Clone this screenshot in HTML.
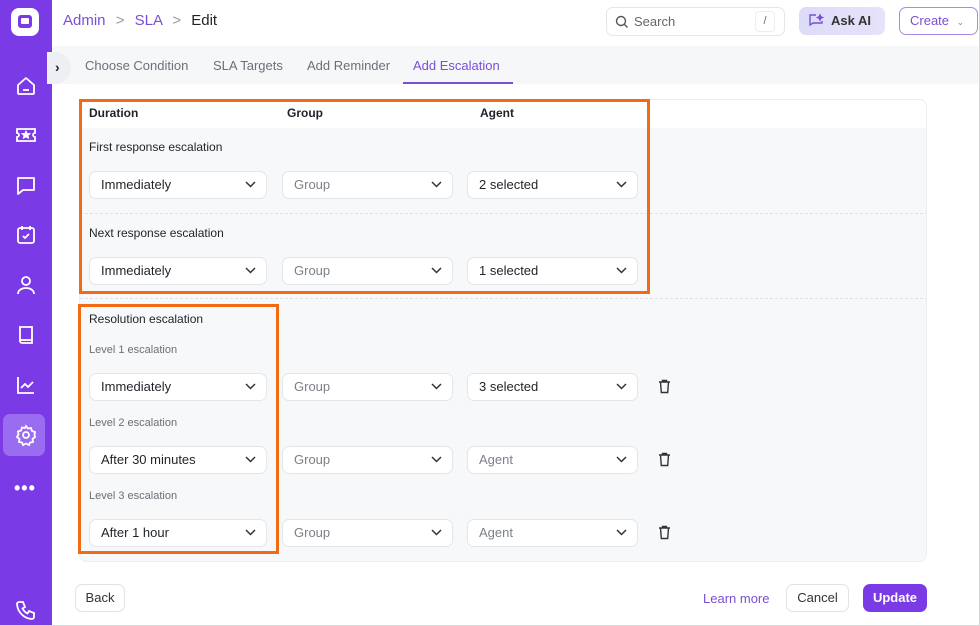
<!DOCTYPE html>
<html><head><style>
*{box-sizing:border-box;margin:0;padding:0}
body{width:980px;height:626px;overflow:hidden;background:#fff;font-family:"Liberation Sans",sans-serif;position:relative;color:#1f2328}
.abs{position:absolute}
.side{left:0;top:0;width:52px;height:626px;background:#7a3ae6}
.ic{position:absolute;left:14px;width:24px;height:24px}
.sel{position:absolute;height:28px;background:#fff;border:1px solid #e3e6ea;border-radius:7px;font-size:13px;line-height:26px;padding-left:11px;color:#1f2328}
.sel.ph{color:#7b8088}
.sel svg{position:absolute;right:10px;top:9px}
.lbl{position:absolute;font-size:12px;color:#1f2328}
.sub{position:absolute;font-size:11px;color:#6b7078}
.btn{position:absolute;height:28px;border:1px solid #e0e3e7;border-radius:7px;font-size:13px;line-height:26px;text-align:center;background:#fff}
</style></head><body>
<div class="abs" style="left:0;top:0;width:980px;height:626px;border:1px solid #d8d8d8;border-left:none;border-top:none;pointer-events:none;z-index:5"></div>
<div class="abs side">
<div class="abs" style="left:11px;top:8px;width:28px;height:28px;border-radius:8px;background:#fff"><div class="abs" style="left:7px;top:7px;width:14px;height:13px;border-radius:3px;background:#7a3ae6"></div><div class="abs" style="left:10px;top:10px;width:8px;height:6px;background:#fff;border-radius:1px"></div></div>
<svg class="ic" style="top:74px" viewBox="0 0 24 24" fill="none" stroke="#fff" stroke-width="1.8" stroke-linejoin="round"><path d="M4 11l8-7 8 7v8a1 1 0 0 1-1 1H5a1 1 0 0 1-1-1z"/><path d="M9 16h6"/></svg>
<svg class="ic" style="top:123px" viewBox="0 0 24 24" fill="none" stroke="#fff" stroke-width="1.8"><path d="M3 6h18v4a2 2 0 0 0 0 4v4H3v-4a2 2 0 0 0 0-4z"/><path d="M12 9l1 2h2l-1.5 1.5.5 2-2-1-2 1 .5-2L9 11h2z" fill="#fff"/></svg>
<svg class="ic" style="top:173px" viewBox="0 0 24 24" fill="none" stroke="#fff" stroke-width="1.8" stroke-linejoin="round"><path d="M4 5h16v12H9l-5 4z"/></svg>
<svg class="ic" style="top:223px" viewBox="0 0 24 24" fill="none" stroke="#fff" stroke-width="1.8"><rect x="4" y="5" width="16" height="15" rx="2"/><path d="M8 3v4M16 3v4M9 13l2 2 4-4"/></svg>
<svg class="ic" style="top:273px" viewBox="0 0 24 24" fill="none" stroke="#fff" stroke-width="1.8"><circle cx="12" cy="8" r="4"/><path d="M4 21c0-4 4-6 8-6s8 2 8 6"/></svg>
<svg class="ic" style="top:323px" viewBox="0 0 24 24" fill="none" stroke="#fff" stroke-width="1.8"><path d="M6 4h12v16H8a2 2 0 0 1-2-2z"/><path d="M6 17h12"/></svg>
<svg class="ic" style="top:373px" viewBox="0 0 24 24" fill="none" stroke="#fff" stroke-width="1.8"><path d="M4 4v16h16"/><path d="M7 15l4-4 3 3 5-5"/></svg>
<div class="abs" style="left:3px;top:414px;width:42px;height:42px;border-radius:7px;background:#9a6cf0"></div>
<svg class="ic" style="top:423px" viewBox="0 0 24 24" fill="none" stroke="#fff" stroke-width="1.8"><circle cx="12" cy="12" r="3"/><path d="M12 3l2 2.5 3-.5 1 3 3 1-.5 3L21 14l-2.5 2 .5 3-3 .5-1 2.5-3-1.5-3 1.5-1-2.5-3-.5.5-3L3 14l1.5-2.5-.5-3 3-1 1-3 3 .5z"/></svg>
<div class="abs" style="left:14px;top:478px;color:#fff;font-size:18px;font-weight:bold;letter-spacing:1px">•••</div>
<svg class="ic" style="top:598px" viewBox="0 0 24 24" fill="none" stroke="#fff" stroke-width="1.8"><path d="M5 4h4l2 5-2.5 1.5a11 11 0 0 0 5 5L15 13l5 2v4a2 2 0 0 1-2 2A16 16 0 0 1 3 6a2 2 0 0 1 2-2z"/></svg>
</div>
<div class="abs" style="left:63px;top:12px;font-size:15px;color:#7a4fd6">Admin <span style="color:#999;margin:0 6px">&gt;</span> SLA <span style="color:#999;margin:0 6px">&gt;</span> <span style="color:#1f2328">Edit</span></div>
<div class="abs" style="left:606px;top:7px;width:179px;height:29px;border:1px solid #e3e6ea;border-radius:7px;font-size:13px;color:#666;line-height:27px;padding-left:27px">Search
<svg class="abs" style="left:8px;top:7px" width="14" height="14" viewBox="0 0 14 14" fill="none" stroke="#555" stroke-width="1.4"><circle cx="6" cy="6" r="4.5"/><path d="M9.5 9.5l3 3"/></svg>
<div class="abs" style="left:148px;top:3px;width:20px;height:21px;border:1px solid #eee;border-radius:4px;font-size:11px;line-height:19px;text-align:center">/</div></div>
<div class="abs" style="left:799px;top:7px;width:86px;height:28px;border-radius:7px;background:linear-gradient(90deg,#dcdcf8,#e8e2fa);font-size:13px;font-weight:bold;line-height:28px;padding-left:32px;color:#333">Ask AI
<svg class="abs" style="left:9px;top:6px" width="17" height="16" viewBox="0 0 17 16" fill="none" stroke="#7a4fd6" stroke-width="1.4"><path d="M8 2H2v10l3-2h9V8"/><path d="M12 2l.8 1.7L14.5 4.5l-1.7.8L12 7l-.8-1.7L9.5 4.5l1.7-.8z" fill="#7a4fd6"/></svg></div>
<div class="abs" style="left:899px;top:7px;width:79px;height:28px;border:1px solid #a88be6;border-radius:7px;font-size:13px;line-height:26px;padding-left:10px;color:#7a4fd6">Create <span style="font-size:9px;color:#888;margin-left:4px">⌄</span></div>
<div class="abs" style="left:52px;top:46px;width:927px;height:38px;background:#f5f7f9"></div>
<div class="abs" style="left:47px;top:52px;width:24px;height:32px;border-radius:0 16px 16px 0;background:#edeff2;font-size:14px;font-weight:bold;line-height:30px;padding-left:8px">›</div>
<div class="abs" style="left:85px;top:58px;font-size:13px;color:#6b7078">Choose Condition</div>
<div class="abs" style="left:213px;top:58px;font-size:13px;color:#6b7078">SLA Targets</div>
<div class="abs" style="left:307px;top:58px;font-size:13px;color:#6b7078">Add Reminder</div>
<div class="abs" style="left:413px;top:58px;font-size:13px;color:#7a4fd6">Add Escalation</div>
<div class="abs" style="left:403px;top:82px;width:110px;height:2px;background:#7a4fd6"></div>
<div class="abs" style="left:79px;top:99px;width:848px;height:463px;border:1px solid #eceef1;border-radius:8px;background:#f6f8fa;overflow:hidden">
<div class="abs" style="left:0;top:0;width:848px;height:28px;background:#fff"></div>
<div class="abs" style="left:0;top:113px;width:848px;border-top:1px dashed #dfe2e6"></div>
<div class="abs" style="left:0;top:198px;width:848px;border-top:1px dashed #dfe2e6"></div>
</div>
<div class="lbl" style="left:89px;top:106px;font-weight:bold">Duration</div>
<div class="lbl" style="left:287px;top:106px;font-weight:bold">Group</div>
<div class="lbl" style="left:480px;top:106px;font-weight:bold">Agent</div>
<div class="lbl" style="left:89px;top:140px">First response escalation</div>
<div class="lbl" style="left:89px;top:226px">Next response escalation</div>
<div class="lbl" style="left:89px;top:312px">Resolution escalation</div>
<div class="sub" style="left:89px;top:344px">Level 1 escalation</div>
<div class="sub" style="left:89px;top:417px">Level 2 escalation</div>
<div class="sub" style="left:89px;top:490px">Level 3 escalation</div>

<div class="sel" style="left:89px;top:171px;width:178px">Immediately<svg width="11" height="7" viewBox="0 0 11 7" fill="none" stroke="#333" stroke-width="1.5"><path d="M1 1l4.5 4.5L10 1"/></svg></div>
<div class="sel ph" style="left:282px;top:171px;width:171px">Group<svg width="11" height="7" viewBox="0 0 11 7" fill="none" stroke="#333" stroke-width="1.5"><path d="M1 1l4.5 4.5L10 1"/></svg></div>
<div class="sel" style="left:467px;top:171px;width:171px">2 selected<svg width="11" height="7" viewBox="0 0 11 7" fill="none" stroke="#333" stroke-width="1.5"><path d="M1 1l4.5 4.5L10 1"/></svg></div>

<div class="sel" style="left:89px;top:257px;width:178px">Immediately<svg width="11" height="7" viewBox="0 0 11 7" fill="none" stroke="#333" stroke-width="1.5"><path d="M1 1l4.5 4.5L10 1"/></svg></div>
<div class="sel ph" style="left:282px;top:257px;width:171px">Group<svg width="11" height="7" viewBox="0 0 11 7" fill="none" stroke="#333" stroke-width="1.5"><path d="M1 1l4.5 4.5L10 1"/></svg></div>
<div class="sel" style="left:467px;top:257px;width:171px">1 selected<svg width="11" height="7" viewBox="0 0 11 7" fill="none" stroke="#333" stroke-width="1.5"><path d="M1 1l4.5 4.5L10 1"/></svg></div>

<div class="sel" style="left:89px;top:373px;width:178px">Immediately<svg width="11" height="7" viewBox="0 0 11 7" fill="none" stroke="#333" stroke-width="1.5"><path d="M1 1l4.5 4.5L10 1"/></svg></div>
<div class="sel ph" style="left:282px;top:373px;width:171px">Group<svg width="11" height="7" viewBox="0 0 11 7" fill="none" stroke="#333" stroke-width="1.5"><path d="M1 1l4.5 4.5L10 1"/></svg></div>
<div class="sel" style="left:467px;top:373px;width:171px">3 selected<svg width="11" height="7" viewBox="0 0 11 7" fill="none" stroke="#333" stroke-width="1.5"><path d="M1 1l4.5 4.5L10 1"/></svg></div>

<div class="sel" style="left:89px;top:446px;width:178px">After 30 minutes<svg width="11" height="7" viewBox="0 0 11 7" fill="none" stroke="#333" stroke-width="1.5"><path d="M1 1l4.5 4.5L10 1"/></svg></div>
<div class="sel ph" style="left:282px;top:446px;width:171px">Group<svg width="11" height="7" viewBox="0 0 11 7" fill="none" stroke="#333" stroke-width="1.5"><path d="M1 1l4.5 4.5L10 1"/></svg></div>
<div class="sel ph" style="left:467px;top:446px;width:171px">Agent<svg width="11" height="7" viewBox="0 0 11 7" fill="none" stroke="#333" stroke-width="1.5"><path d="M1 1l4.5 4.5L10 1"/></svg></div>

<div class="sel" style="left:89px;top:519px;width:178px">After 1 hour<svg width="11" height="7" viewBox="0 0 11 7" fill="none" stroke="#333" stroke-width="1.5"><path d="M1 1l4.5 4.5L10 1"/></svg></div>
<div class="sel ph" style="left:282px;top:519px;width:171px">Group<svg width="11" height="7" viewBox="0 0 11 7" fill="none" stroke="#333" stroke-width="1.5"><path d="M1 1l4.5 4.5L10 1"/></svg></div>
<div class="sel ph" style="left:467px;top:519px;width:171px">Agent<svg width="11" height="7" viewBox="0 0 11 7" fill="none" stroke="#333" stroke-width="1.5"><path d="M1 1l4.5 4.5L10 1"/></svg></div>

<svg class="abs" style="left:658px;top:379px" width="13" height="15" viewBox="0 0 13 15" fill="none" stroke="#333" stroke-width="1.4"><path d="M1 3h11M4.5 3V1.5h4V3M2.5 3l.8 10.5h6.4L10.5 3"/></svg>
<svg class="abs" style="left:658px;top:452px" width="13" height="15" viewBox="0 0 13 15" fill="none" stroke="#333" stroke-width="1.4"><path d="M1 3h11M4.5 3V1.5h4V3M2.5 3l.8 10.5h6.4L10.5 3"/></svg>
<svg class="abs" style="left:658px;top:525px" width="13" height="15" viewBox="0 0 13 15" fill="none" stroke="#333" stroke-width="1.4"><path d="M1 3h11M4.5 3V1.5h4V3M2.5 3l.8 10.5h6.4L10.5 3"/></svg>

<div class="abs" style="left:79px;top:99px;width:571px;height:195px;border:3px solid #f06b14"></div>
<div class="abs" style="left:78px;top:304px;width:201px;height:250px;border:3px solid #f06b14"></div>

<div class="btn" style="left:75px;top:584px;width:50px;color:#333">Back</div>
<div class="abs" style="left:703px;top:591px;font-size:13px;color:#7a4fd6">Learn more</div>
<div class="btn" style="left:786px;top:584px;width:63px;color:#333">Cancel</div>
<div class="btn" style="left:863px;top:584px;width:64px;background:#7a3ae6;border-color:#7a3ae6;color:#fff;font-weight:bold">Update</div>
</body></html>
